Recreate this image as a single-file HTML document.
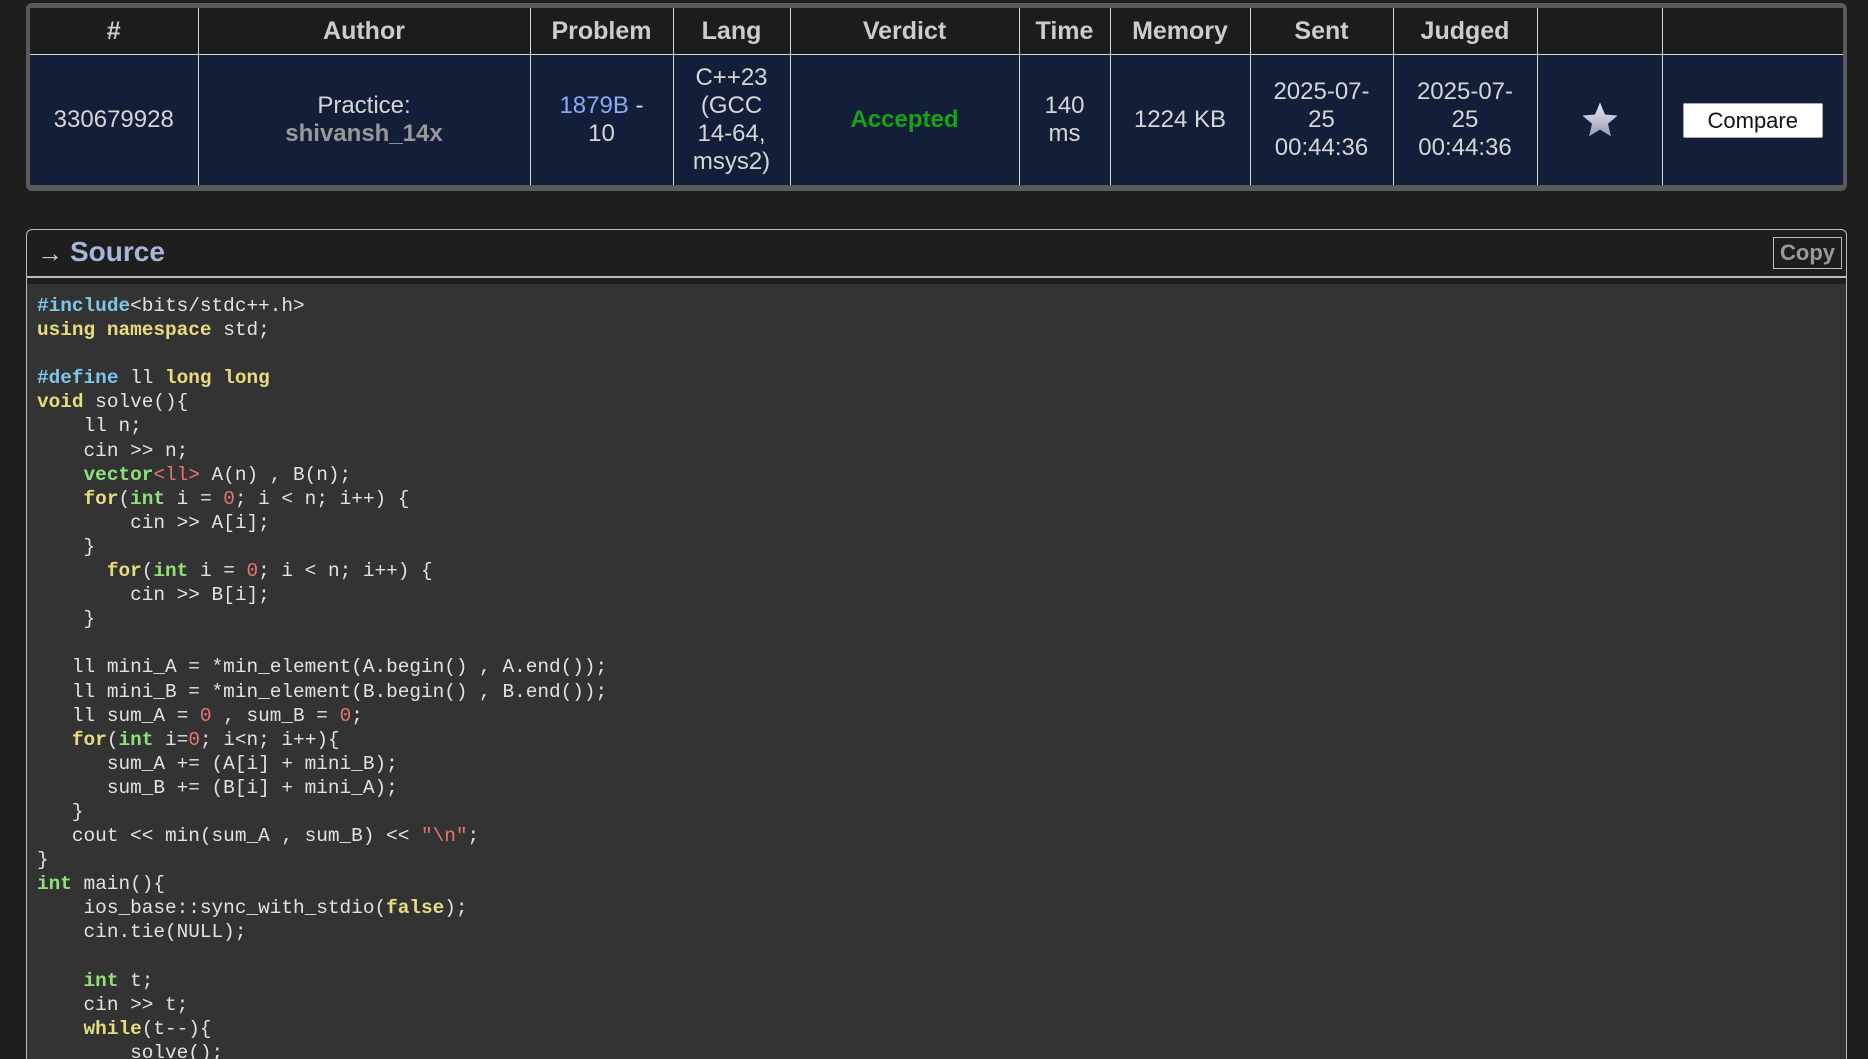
<!DOCTYPE html>
<html style="overflow:hidden;height:1059px"><head><meta charset="utf-8"><style>
html,body{margin:0;background:#1e1e1e;width:1868px;height:1059px;overflow:hidden;font-family:"Liberation Sans",sans-serif;}
body{position:relative}
.frame{position:absolute;left:26px;top:3px;width:1821px;height:188px;background:#5a5a5a;border-radius:6px;}
table{position:absolute;left:30px;top:8px;border-collapse:collapse;table-layout:fixed;}
td,th{border:1px solid #d8d8d8;text-align:center;color:#d6d6d6;padding:0;}
th{background:#1c1c1c;height:46px;font-size:25px;font-weight:bold;color:#ccc;}
td{background:#131e39;height:130px;font-size:24px;line-height:28px;}
tr:first-child th{border-top:none}
th:first-child,td:first-child{border-left:none}
th:last-child,td:last-child{border-right:none}
td{border-bottom:none}
.src{position:absolute;left:26px;top:229px;width:1819px;height:860px;border:1px solid #bbb;border-radius:6px;background:#1e1e1e;overflow:hidden}
.srch{height:46px;border-bottom:2px solid #bbb;position:relative}
.code{position:absolute;top:54px;left:0;right:0;bottom:0;background:#333;padding:10px 0 0 10px;font-family:"Liberation Mono",monospace;font-size:19.4px;line-height:24.1px;color:#e2e2e2;white-space:pre;overflow:hidden}
.k{color:#7ec6ea;font-weight:bold}.y{color:#e8dc7e;font-weight:bold}.g{color:#8ee27a;font-weight:bold}.r{color:#e8746e}
</style></head><body>
<div class="frame"></div>
<table>
<colgroup><col style="width:168px"><col style="width:332px"><col style="width:143px"><col style="width:117px"><col style="width:229px"><col style="width:91px"><col style="width:140px"><col style="width:143px"><col style="width:144px"><col style="width:125px"><col style="width:181px"></colgroup>
<tr><th>#</th><th>Author</th><th>Problem</th><th>Lang</th><th>Verdict</th><th>Time</th><th>Memory</th><th>Sent</th><th>Judged</th><th></th><th></th></tr>
<tr><td>330679928</td><td>Practice:<br><span style="color:#999;font-weight:bold">shivansh_14x</span></td><td><span style="color:#8aa8f5">1879B</span> -<br>10</td><td>C++23<br>(GCC<br>14-64,<br>msys2)</td><td style="color:#16a316;font-weight:bold">Accepted</td><td>140<br>ms</td><td>1224 KB</td><td>2025-07-<br>25<br>00:44:36</td><td>2025-07-<br>25<br>00:44:36</td>
<td><svg width="40" height="40" viewBox="0 0 24 24" style="vertical-align:middle"><defs><linearGradient id="s" x1="0" y1="0" x2="0" y2="1"><stop offset="0" stop-color="#e8e8f4"/><stop offset="1" stop-color="#9a9ab8"/></linearGradient></defs><path d="M12 1.5l3 7.2 7.6.6-5.8 5 1.8 7.5L12 17.8l-6.6 4 1.8-7.5-5.8-5 7.6-.6z" fill="url(#s)"/></svg></td>
<td><span style="display:inline-block;background:#fff;color:#111;border:1px solid #aaa;border-radius:2px;width:138px;height:33px;line-height:33px;font-size:22px">Compare</span></td></tr>
</table>
<div class="src"><div class="srch"><span style="position:absolute;left:10px;top:8px;font-size:26px;color:#ccc">→</span><span style="position:absolute;left:43px;top:6px;font-size:28px;font-weight:bold;color:#a7b6d8">Source</span><span style="position:absolute;right:4px;top:7px;width:67px;height:30px;border:1px solid #bbb;color:#999;font-weight:bold;font-size:22px;text-align:center;line-height:30px">Copy</span></div>
<div class="code"><span class="k">#include</span>&lt;bits/stdc++.h&gt;
<span class="y">using</span> <span class="y">namespace</span> std;

<span class="k">#define</span> ll <span class="y">long</span> <span class="y">long</span>
<span class="y">void</span> solve(){
    ll n;
    cin &gt;&gt; n;
    <span class="g">vector</span><span class="r">&lt;ll&gt;</span> A(n) , B(n);
    <span class="y">for</span>(<span class="g">int</span> i = <span class="r">0</span>; i &lt; n; i++) {
        cin &gt;&gt; A[i];
    }
      <span class="y">for</span>(<span class="g">int</span> i = <span class="r">0</span>; i &lt; n; i++) {
        cin &gt;&gt; B[i];
    }

   ll mini_A = *min_element(A.begin() , A.end());
   ll mini_B = *min_element(B.begin() , B.end());
   ll sum_A = <span class="r">0</span> , sum_B = <span class="r">0</span>;
   <span class="y">for</span>(<span class="g">int</span> i=<span class="r">0</span>; i&lt;n; i++){
      sum_A += (A[i] + mini_B);
      sum_B += (B[i] + mini_A);
   }
   cout &lt;&lt; min(sum_A , sum_B) &lt;&lt; <span class="r">"\n"</span>;
}
<span class="g">int</span> main(){
    ios_base::sync_with_stdio(<span class="y">false</span>);
    cin.tie(NULL);

    <span class="g">int</span> t;
    cin &gt;&gt; t;
    <span class="y">while</span>(t--){
        solve();
    }
}</div></div>
</body></html>
